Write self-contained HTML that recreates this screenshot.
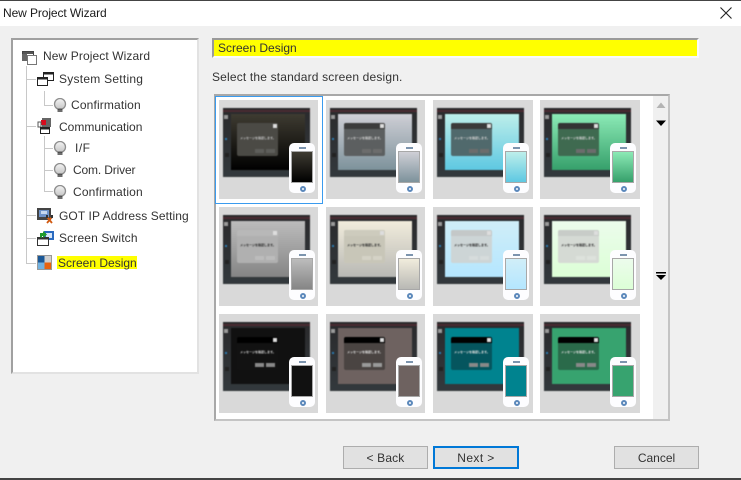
<!DOCTYPE html>
<html><head><meta charset="utf-8">
<style>
html,body{margin:0;padding:0}
body{width:741px;height:480px;background:#f0f0f0;position:relative;overflow:hidden;font-family:"Liberation Sans","Noto Sans CJK JP",sans-serif;font-size:12px;color:#333}
.abs,.t,svg.i{position:absolute}
.title{position:absolute;left:0;top:0;width:741px;height:26px;background:#fff;border-top:1px solid #444;box-sizing:border-box}
.title span{position:absolute;left:3px;top:5px;color:#1a1a1a;letter-spacing:-.1px;font-size:12px;line-height:14px;filter:blur(.2px)}
.tree{position:absolute;left:11px;top:38px;width:188px;height:336px;box-sizing:border-box;background:#fff;border:2px solid;border-color:#a0a0a0 #e2e2e2 #e2e2e2 #a0a0a0}
.t{white-space:nowrap;line-height:14px;letter-spacing:.1px;color:#333;filter:blur(.25px)}
.l{position:absolute;background:#c8c8c8}
.hdr{position:absolute;left:212px;top:38px;width:487px;height:20px;box-sizing:border-box;background:#ff0;border:2px solid;border-color:#9a9a9a #fafafa #fafafa #9a9a9a}
.frame{position:absolute;left:214px;top:94px;width:456px;height:327px;box-sizing:border-box;background:#fff;border:2px solid;border-color:#a8a8a8 #c4c4c4 #c4c4c4 #a8a8a8}
.sb{position:absolute;left:653px;top:96px;width:15px;height:323px;background:#f0f0f0}
.selb{position:absolute;background:#3a9bee}
.tile{position:absolute;width:99px;height:99px;background:#d9d9d9;overflow:hidden}
.m{position:absolute;left:4px;top:8px;width:87px;height:69px;background:linear-gradient(#2a2a2c,#33393d);filter:blur(.45px)}
.m:before{content:"";position:absolute;left:0;top:2px;width:87px;height:2px;background:#4a2a30}
.m:after{content:"";position:absolute;left:2px;top:30px;width:2px;height:2px;background:#2a7ab0;box-shadow:0 -22px 0 1px #999,1px 16px 0 1px #222}
.s{position:absolute;left:8px;top:6px;width:74px;height:56px;background:linear-gradient(var(--a),var(--b))}
.d{position:absolute;left:6px;top:9px;width:41px;height:33px;border-radius:2px;background:var(--d);overflow:hidden}
.d i{position:absolute;left:0;top:0;width:41px;height:6px;background:var(--h)}
.d b{position:absolute;right:1px;top:1px;width:4px;height:4px;background:#ddd}
.d u{position:absolute;top:26px;width:9px;height:4px;background:var(--k);text-decoration:none}
.d em{position:absolute;left:3px;top:13px;font:normal 3px/4px "Noto Sans CJK JP",sans-serif;white-space:nowrap;color:var(--x);text-shadow:0 0 .6px var(--x)}
.p{position:absolute;left:70px;top:43px;width:26px;height:50px;border-radius:5px;background:#fdfdff;filter:blur(.25px)}
.p:before{content:"";position:absolute;left:10px;top:4px;width:7px;height:2px;background:#7c94ae}
.p s{position:absolute;left:2px;top:8px;width:22px;height:32px;box-sizing:border-box;border:1px solid #a8a8a8;background:linear-gradient(var(--a),var(--b))}
.p:after{content:"";position:absolute;left:10.500px;top:42.500px;width:2px;height:2px;border:2px solid #5b88bb;border-radius:50%}
.btn{position:absolute;top:446px;height:23px;width:85px;box-sizing:border-box;background:#e1e1e1;border:1px solid #adadad;text-align:center;line-height:22px;letter-spacing:.15px;color:#333}
.btn span{filter:blur(.2px);display:inline-block}
.bar{position:absolute;left:0;top:478px;width:741px;height:2px;background:#444}
</style></head><body>
<div class="title"><span>New Project Wizard</span></div>
<svg class="i" style="left:719px;top:6px" width="14" height="14" viewBox="0 0 14 14"><path d="M1.500 1.500 12.500 12.500M12.500 1.500 1.500 12.500" stroke="#222" stroke-width="1.100" fill="none"/></svg>

<div class="tree"></div>
<div class="l" style="left:26px;top:66px;width:1px;height:197px"></div>
<div class="l" style="left:26px;top:79px;width:10px;height:1px"></div>
<div class="l" style="left:26px;top:126px;width:10px;height:1px"></div>
<div class="l" style="left:26px;top:215px;width:10px;height:1px"></div>
<div class="l" style="left:26px;top:238px;width:10px;height:1px"></div>
<div class="l" style="left:26px;top:263px;width:10px;height:1px"></div>
<div class="l" style="left:44px;top:91px;width:1px;height:14px"></div>
<div class="l" style="left:44px;top:105px;width:9px;height:1px"></div>
<div class="l" style="left:44px;top:136px;width:1px;height:55px"></div>
<div class="l" style="left:44px;top:148px;width:9px;height:1px"></div>
<div class="l" style="left:44px;top:170px;width:9px;height:1px"></div>
<div class="l" style="left:44px;top:191px;width:9px;height:1px"></div>

<svg class="i" style="left:21px;top:49px" width="16" height="16" viewBox="0 0 16 16"><path d="M1 2h12v3H1z" fill="#555"/><path d="M1.500 2.500h11v9h-11z" fill="none" stroke="#444"/><path d="M1 5h5v7H1z" fill="#666"/><path d="M6.500 6.500h9v9h-9z" fill="#fff" stroke="#777"/></svg>
<svg class="i" style="left:37px;top:71px" width="17" height="16" viewBox="0 0 17 16"><path d="M6.500 1.500h10v8h-10z" fill="#fff" stroke="#222"/><path d="M6 1h11v2.500H6z" fill="#222"/><path d="M.5 6.500h10v8H.5z" fill="#fff" stroke="#222"/><path d="M0 6h11v2.500H0z" fill="#222"/></svg>
<svg class="i" style="left:37px;top:118px" width="15" height="17" viewBox="0 0 15 17"><path d="M5 0h9v9H5z" fill="#666"/><path d="M4 2h5v5H4z" fill="#d8091c"/><path d="M1 4h3v5H1z" fill="none" stroke="#555"/><path d="M3.500 9.500h9v6h-9z" fill="#fff" stroke="#222"/><path d="M3 9h10v2.500H3z" fill="#222"/></svg>

<svg width="0" height="0" style="position:absolute"><defs><linearGradient id="bg" x1="0" y1="0" x2="0" y2="1"><stop offset="0" stop-color="#f4f4f4"/><stop offset="1" stop-color="#c4c4c4"/></linearGradient><symbol id="bulb" viewBox="0 0 14 15"><circle cx="7" cy="6" r="5.500" fill="url(#bg)" stroke="#8e8e8e" stroke-width="1.300"/><path d="M4.500 10.500h5v3.500h-5z" fill="#6d6d6d"/><path d="M5 11.500c1-.5 3-.5 4 0" stroke="#444" fill="none"/></symbol></defs></svg>
<svg class="i" style="left:53px;top:98px" width="14" height="15"><use href="#bulb"/></svg>
<svg class="i" style="left:53px;top:141px" width="14" height="15"><use href="#bulb"/></svg>
<svg class="i" style="left:53px;top:163px" width="14" height="15"><use href="#bulb"/></svg>
<svg class="i" style="left:53px;top:185px" width="14" height="15"><use href="#bulb"/></svg>

<svg class="i" style="left:37px;top:207px" width="17" height="17" viewBox="0 0 17 17"><path d="M0 1h14v12H0z" fill="#444"/><path d="M2 3h10v7H2z" fill="#6f93c9"/><path d="M4 4h6v3H4z" fill="#c7d8ee"/><path d="M10 10 15 16M15 10 10 16" stroke="#d05a12" stroke-width="1.800"/><path d="M9 8h2v3H9zM14 8h2v3h-2z" fill="#333"/></svg>
<svg class="i" style="left:37px;top:230px" width="17" height="17" viewBox="0 0 17 17"><path d="M7 1h10v9H7z" fill="#2a6ac0"/><path d="M9 3h6v5H9z" fill="#d5e5f8"/><path d="M.5 7.500h11v8H.5z" fill="#fff" stroke="#333"/><path d="M0 7h12v2.500H0z" fill="#333"/><path d="M3 7V3h3V1l4 3.500L6 8V6H5v2z" fill="#1f9b2c"/></svg>
<svg class="i" style="left:37px;top:255px" width="15" height="15" viewBox="0 0 15 15"><path d="M0 0h15v15H0z" fill="#999"/><path d="M1 1h6.500v6.500H1z" fill="#1a5796"/><path d="M7.500 1H14v6.500H7.500z" fill="#d0d0d0"/><path d="M1 7.500h6.500V14H1z" fill="#72b2e0"/><path d="M7.500 7.500H14V14H7.500z" fill="#e8620e"/></svg>

<div class="t" style="left:43px;top:49px">New Project Wizard</div>
<div class="t" style="left:59px;top:72px;letter-spacing:.25px">System Setting</div>
<div class="t" style="left:71px;top:98px;letter-spacing:.15px">Confirmation</div>
<div class="t" style="left:59px;top:120px;letter-spacing:0">Communication</div>
<div class="t" style="left:75px;top:141px;letter-spacing:.5px">I/F</div>
<div class="t" style="left:73px;top:163px;letter-spacing:-.15px">Com. Driver</div>
<div class="t" style="left:73px;top:185px;letter-spacing:.15px">Confirmation</div>
<div class="t" style="left:59px;top:209px;letter-spacing:.1px">GOT IP Address Setting</div>
<div class="t" style="left:59px;top:231px;letter-spacing:.15px">Screen Switch</div>
<div class="abs" style="left:57px;top:256px;height:13px;width:80px;background:#ff0"></div>
<div class="t" style="left:58px;top:255.500px;letter-spacing:0">Screen Design</div>

<div class="hdr"></div>
<div class="t" style="left:218px;top:41px;color:#333;letter-spacing:0">Screen Design</div>
<div class="t" style="left:212px;top:70px;letter-spacing:.17px">Select the standard screen design.</div>

<div class="frame"></div>
<div class="sb"></div>
<svg class="i" style="left:654px;top:100px" width="14" height="180" viewBox="0 0 14 180"><path d="M2.500 8 7 2.500 11.500 8z" fill="#b4b4b4"/><path d="M2 20.500h10L7 26z" fill="#000"/><path d="M2 172h10v1.500H2z" fill="#000"/><path d="M2 175h10L7 180z" fill="#000"/></svg>

<!-- row 1 -->
<div class="tile" style="left:219px;top:100px;--a:#3e3b31;--b:#000;--d:#4b4a45;--h:#4b4a45;--k:#5e5e5a;--x:#bbb"><div class="m"><div class="s"><div class="d"><i></i><b></b><em>メッセージを確認します。</em><u style="left:18px"></u><u style="left:29px"></u></div></div></div><div class="p"><s></s></div></div>
<div class="tile" style="left:326px;top:100px;--a:#cfcfd6;--b:#7d929b;--d:#5c5f60;--h:#3c3c3c;--k:#6c6c6c;--x:#ccc"><div class="m"><div class="s"><div class="d"><i></i><b></b><em>メッセージを確認します。</em><u style="left:18px"></u><u style="left:29px"></u></div></div></div><div class="p"><s></s></div></div>
<div class="tile" style="left:433px;top:100px;--a:#bdeeea;--b:#5ec8e2;--d:#50696c;--h:#3a3a3a;--k:#6c6c6c;--x:#ccc;width:100px"><div class="m"><div class="s"><div class="d"><i></i><b></b><em>メッセージを確認します。</em><u style="left:18px"></u><u style="left:29px"></u></div></div></div><div class="p"><s></s></div></div>
<div class="tile" style="left:540px;top:100px;--a:#8ceab6;--b:#36a06b;--d:#3f6a50;--h:#333;--k:#6c6c6c;--x:#ccc;width:100px"><div class="m"><div class="s"><div class="d"><i></i><b></b><em>メッセージを確認します。</em><u style="left:18px"></u><u style="left:29px"></u></div></div></div><div class="p"><s></s></div></div>
<!-- row 2 -->
<div class="tile" style="left:219px;top:207px;--a:#bcbcbc;--b:#858585;--d:#b0b0b0;--h:#b8b8b8;--k:#bcbcbc;--x:#333"><div class="m"><div class="s"><div class="d"><i></i><b></b><em>メッセージを確認します。</em><u style="left:18px"></u><u style="left:29px"></u></div></div></div><div class="p"><s></s></div></div>
<div class="tile" style="left:326px;top:207px;--a:#f1ecdc;--b:#b8b8b4;--d:#c8c6b8;--h:#cdcbbd;--k:#d4d2c6;--x:#333"><div class="m"><div class="s"><div class="d"><i></i><b></b><em>メッセージを確認します。</em><u style="left:18px"></u><u style="left:29px"></u></div></div></div><div class="p"><s></s></div></div>
<div class="tile" style="left:433px;top:207px;--a:#d0eef8;--b:#b4e6ff;--d:#cdd5d6;--h:#c4c8c8;--k:#d6dcdc;--x:#333;width:100px"><div class="m"><div class="s"><div class="d"><i></i><b></b><em>メッセージを確認します。</em><u style="left:18px"></u><u style="left:29px"></u></div></div></div><div class="p"><s></s></div></div>
<div class="tile" style="left:540px;top:207px;--a:#ecfcec;--b:#dcffd6;--d:#d5dad4;--h:#c8ccc8;--k:#dde2dc;--x:#333;width:100px"><div class="m"><div class="s"><div class="d"><i></i><b></b><em>メッセージを確認します。</em><u style="left:18px"></u><u style="left:29px"></u></div></div></div><div class="p"><s></s></div></div>
<!-- row 3 -->
<div class="tile" style="left:219px;top:314px;--a:#111;--b:#111;--d:#121212;--h:#000;--k:#888;--x:#ccc"><div class="m"><div class="s"><div class="d"><i></i><b></b><em>メッセージを確認します。</em><u style="left:18px"></u><u style="left:29px"></u></div></div></div><div class="p"><s></s></div></div>
<div class="tile" style="left:326px;top:314px;--a:#6e6260;--b:#6e6260;--d:#4a4442;--h:#000;--k:#999;--x:#ddd"><div class="m"><div class="s"><div class="d"><i></i><b></b><em>メッセージを確認します。</em><u style="left:18px"></u><u style="left:29px"></u></div></div></div><div class="p"><s></s></div></div>
<div class="tile" style="left:433px;top:314px;--a:#00838f;--b:#00838f;--d:#05555e;--h:#000;--k:#888;--x:#ddd;width:100px"><div class="m"><div class="s"><div class="d"><i></i><b></b><em>メッセージを確認します。</em><u style="left:18px"></u><u style="left:29px"></u></div></div></div><div class="p"><s></s></div></div>
<div class="tile" style="left:540px;top:314px;--a:#37a36f;--b:#37a36f;--d:#2a6a4a;--h:#000;--k:#888;--x:#ddd;width:100px"><div class="m"><div class="s"><div class="d"><i></i><b></b><em>メッセージを確認します。</em><u style="left:18px"></u><u style="left:29px"></u></div></div></div><div class="p"><s></s></div></div>
<div class="selb" style="left:215px;top:96px;width:108px;height:1px"></div>
<div class="selb" style="left:215px;top:203px;width:108px;height:1px"></div>
<div class="selb" style="left:215px;top:96px;width:1px;height:108px"></div>
<div class="selb" style="left:322px;top:96px;width:1px;height:108px"></div>

<div class="btn" style="left:343px"><span>&lt; Back</span></div>
<div class="btn" style="left:433px;width:86px;border:2px solid #0078d7;line-height:20px;letter-spacing:.4px"><span>Next &gt;</span></div>
<div class="btn" style="left:614px;letter-spacing:0"><span>Cancel</span></div>
<div class="bar"></div>
</body></html>
